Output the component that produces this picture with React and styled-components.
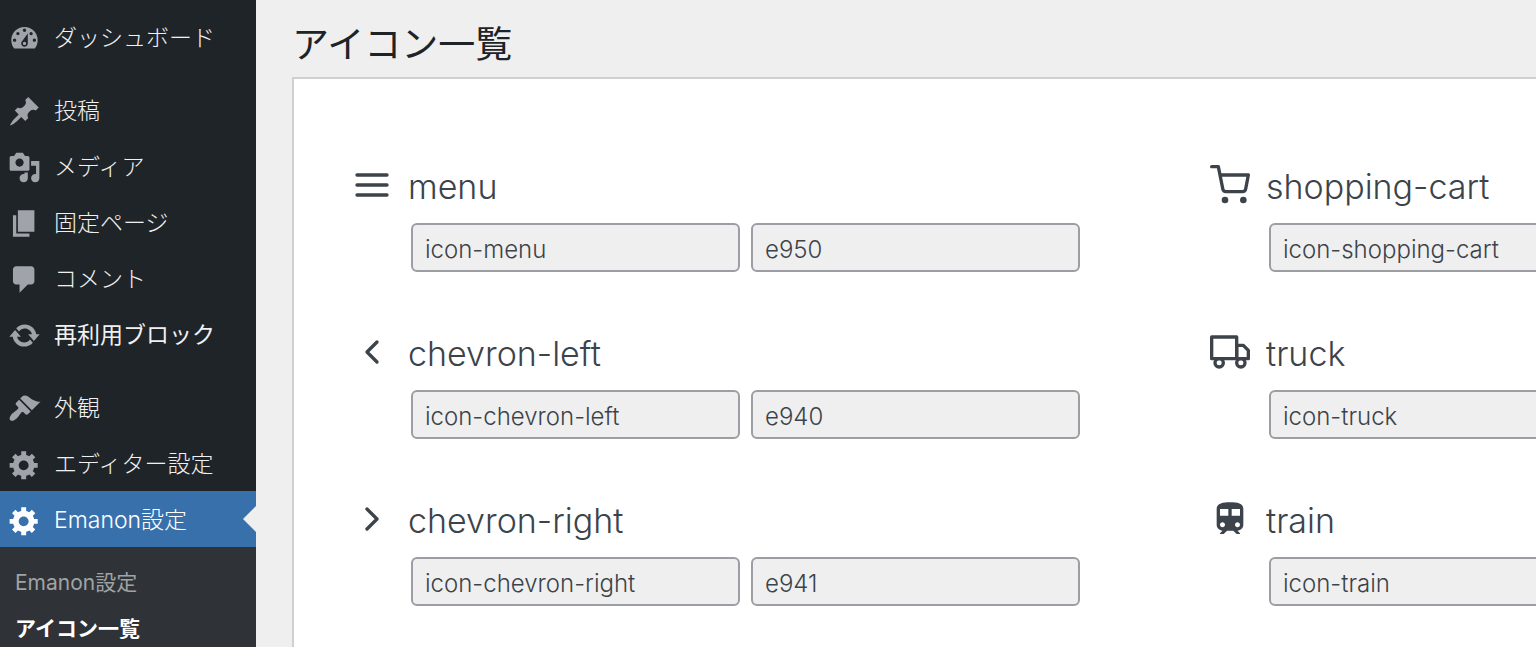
import React, { Fragment } from 'react';
import styled, { createGlobalStyle } from 'styled-components';
import { FiMenu, FiChevronLeft, FiChevronRight, FiShoppingCart, FiTruck } from 'react-icons/fi';
import { MdTrain } from 'react-icons/md';

const GlobalStyle = createGlobalStyle`
  * {
    box-sizing: border-box;
  }
  body {
    margin: 0;
    background: #efefef;
    color: #3c434a;
    font-family: Inter, 'Noto Sans CJK JP', sans-serif;
    overflow: hidden;
  }
`;

const Layout = styled.div`
  display: flex;
  height: 100vh;
`;
const Sidebar = styled.nav`
  flex: 0 0 256px;
  padding-top: 9px;
  background: #1f2428;
  overflow: hidden;
`;
const MenuList = styled.ul`
  margin: 0 0 17px;
  padding: 0;
  list-style: none;
`;
const MenuLink = styled.a`
  position: relative;
  display: flex;
  align-items: center;
  gap: 13px;
  height: 56px;
  padding: 2px 0 0 8px;
  background: ${props => (props.$active ? '#3870ac' : 'transparent')};
  color: ${props => (props.$active ? '#fff' : '#f0f0f1')};
  font-size: 23px;
  font-weight: ${props => (props.$strong ? 400 : 300)};
  line-height: 32px;
  text-decoration: none;
  white-space: nowrap;

  &::after {
    content: '';
    display: ${props => (props.$active ? 'block' : 'none')};
    position: absolute;
    top: 15px;
    right: 0;
    border: 13px solid transparent;
    border-left: 0;
    border-right-color: #efefef;
  }
`;
const MenuIcon = styled.svg`
  width: 33px;
  height: 33px;
  fill: ${props => (props.$active ? '#fff' : '#a0a4aa')};
`;
const Submenu = styled.ul`
  margin: 0;
  padding: 13px 0;
  background: #2f3337;
  list-style: none;
`;
const SubmenuLink = styled.a`
  display: block;
  padding-left: 15px;
  color: ${props => (props.$current ? '#fff' : '#a0a3a6')};
  font-size: 21px;
  font-weight: ${props => (props.$current ? 600 : 400)};
  line-height: 46px;
  text-decoration: none;
`;

const Main = styled.main`
  flex: 1;
  min-width: 0;
  display: flex;
  flex-direction: column;
  padding: 12px 0 0 36px;
`;
const PageTitle = styled.h1`
  margin: 0;
  color: #1d2327;
  font-size: 37px;
  font-weight: 400;
  line-height: 65px;
`;
const Card = styled.section`
  flex: 1;
  display: grid;
  grid-template-columns: repeat(2, max-content);
  align-content: start;
  gap: 60px 130px;
  padding: 86px 0 0 58px;
  border: solid #cfd0d2;
  border-width: 2px 0 0 2px;
  background: #fff;
  overflow: hidden;
`;
const Entry = styled.div`
  display: flex;
  gap: 16px;
`;
const Label = styled.label`
  display: block;
  margin-bottom: 14px;
  font-size: 34px;
  font-weight: 300;
  line-height: 44px;
`;
const Fields = styled.div`
  display: flex;
  gap: 11px;
  padding-left: 3px;
`;
const Input = styled.input`
  width: 329px;
  height: 49px;
  padding: 3px 12px 0;
  border: 2px solid #9c9ea3;
  border-radius: 6px;
  background: #efefef;
  color: #3c434a;
  font-family: inherit;
  font-size: 24px;
  font-weight: 300;
`;

// 20x20 admin menu glyphs
const paths = {
  dashboard:
    'M3.76 16h12.48c1.1-1.37 1.76-3.11 1.76-5 0-4.42-3.58-8-8-8s-8 3.58-8 8c0 1.89.66 3.63 1.76 5zM10 4c.55 0 1 .45 1 1s-.45 1-1 1-1-.45-1-1 .45-1 1-1zM6 6c.55 0 1 .45 1 1s-.45 1-1 1-1-.45-1-1 .45-1 1-1zm8 0c.55 0 1 .45 1 1s-.45 1-1 1-1-.45-1-1 .45-1 1-1zm-5.37 5.55L12 7v6c0 1.1-.9 2-2 2s-2-.9-2-2c0-.57.24-1.08.63-1.45zM4 10c.55 0 1 .45 1 1s-.45 1-1 1-1-.45-1-1 .45-1 1-1zm12 0c.55 0 1 .45 1 1s-.45 1-1 1-1-.45-1-1 .45-1 1-1zm-5 3c0-.55-.45-1-1-1s-1 .45-1 1 .45 1 1 1 1-.45 1-1z',
  post: 'M10.44 3.02l1.82-1.82 6.36 6.35-1.83 1.82c-1.05-.68-2.48-.57-3.41.36l-.75.75c-.92.93-1.04 2.35-.35 3.41l-1.83 1.82-2.41-2.41-2.8 2.79c-.42.42-3.38 2.71-3.8 2.29s1.86-3.39 2.28-3.81l2.79-2.79L4.1 9.36l1.83-1.82c1.05.69 2.48.57 3.4-.36l.75-.75c.93-.92 1.05-2.35.36-3.41z',
  media:
    'M13 11V4c0-.55-.45-1-1-1h-1.67L9 1H5L3.67 3H2c-.55 0-1 .45-1 1v7c0 .55.45 1 1 1h10c.55 0 1-.45 1-1zM7 4.5c1.38 0 2.5 1.12 2.5 2.5S8.38 9.5 7 9.5 4.5 8.38 4.5 7 5.62 4.5 7 4.5zM14 6h5v10.5c0 1.38-1.12 2.5-2.5 2.5S14 17.88 14 16.5s1.12-2.5 2.5-2.5c.17 0 .34.02.5.05V9h-3V6zm-4 8.05V13h2v3.5c0 1.38-1.12 2.5-2.5 2.5S7 17.88 7 16.5 8.12 14 9.5 14c.17 0 .34.02.5.05z',
  page: 'M6 15V2h10v13H6zm-1 1h8v2H3V5h2v11z',
  comment: 'M5 2h9c1.1 0 2 .9 2 2v7c0 1.1-.9 2-2 2h-2l-5 5v-5H5c-1.1 0-2-.9-2-2V4c0-1.1.9-2 2-2z',
  update:
    'M10.2 3.28c3.53 0 6.43 2.61 6.92 6h2.08l-3.5 4-3.5-4h2.32c-.45-1.97-2.21-3.45-4.32-3.45-1.45 0-2.73.71-3.54 1.78L4.95 5.66C6.23 4.2 8.11 3.28 10.2 3.28zm-.4 13.44c-3.52 0-6.43-2.61-6.92-6H.8l3.5-4c1.17 1.33 2.33 2.67 3.5 4H5.48c.45 1.97 2.21 3.45 4.32 3.45 1.45 0 2.73-.71 3.54-1.78l1.71 1.95c-1.28 1.46-3.15 2.38-5.25 2.38z',
  brush:
    'M14.48 11.06L7.41 3.99l1.5-1.5c.5-.56 2.3-.47 3.51.32 1.21.8 1.43 1.28 2.91 2.1 1.18.64 2.45 1.26 4.45.85zm-.71.71L6.7 4.7 4.93 6.47c-.39.39-.39 1.02 0 1.41l1.06 1.06c.39.39.39 1.03 0 1.42-.6.6-1.43 1.11-2.21 1.69-.35.26-.7.53-1.01.84C1.43 14.23.4 16.08 1.4 17.07c.99 1 2.84-.03 4.18-1.36.31-.31.58-.66.85-1.02.57-.78 1.08-1.61 1.69-2.21.39-.39 1.02-.39 1.41 0l1.06 1.06c.39.39 1.02.39 1.41 0z',
  gear: 'M18 12h-2.18c-.17.7-.44 1.35-.81 1.93l1.54 1.54-2.1 2.1-1.54-1.54c-.58.36-1.23.63-1.91.79V19H8v-2.18c-.68-.16-1.33-.43-1.91-.79l-1.54 1.54-2.12-2.12 1.54-1.54c-.36-.58-.63-1.23-.79-1.91H1V9.03h2.17c.16-.7.44-1.35.8-1.94L2.43 5.55l2.1-2.1 1.54 1.54c.58-.37 1.24-.64 1.93-.81V2h3v2.18c.68.16 1.33.43 1.91.79l1.54-1.54 2.12 2.12-1.54 1.54c.36.59.64 1.24.8 1.94H18V12zm-8.5 1.5c1.66 0 3-1.34 3-3s-1.34-3-3-3-3 1.34-3 3 1.34 3 3 3z',
};

const menuGroups = [
  [{ text: 'ダッシュボード', icon: 'dashboard' }],
  [
    { text: '投稿', icon: 'post' },
    { text: 'メディア', icon: 'media' },
    { text: '固定ページ', icon: 'page' },
    { text: 'コメント', icon: 'comment' },
    { text: '再利用ブロック', icon: 'update', strong: true },
  ],
  [
    { text: '外観', icon: 'brush' },
    { text: 'エディター設定', icon: 'gear' },
    {
      text: 'Emanon設定',
      icon: 'gear',
      active: true,
      children: [{ text: 'Emanon設定' }, { text: 'アイコン一覧', current: true }],
    },
  ],
];

const icons = [
  { name: 'menu', code: 'e950', Icon: FiMenu },
  { name: 'shopping-cart', code: 'e96e', Icon: FiShoppingCart },
  { name: 'chevron-left', code: 'e940', Icon: FiChevronLeft },
  { name: 'truck', code: 'e98e', Icon: FiTruck },
  { name: 'chevron-right', code: 'e941', Icon: FiChevronRight },
  { name: 'train', code: 'e91a', Icon: MdTrain },
];

const MenuItem = ({ text, icon, active, strong, children }) => {
  return (
    <li>
      <MenuLink href="#" $active={active} $strong={strong}>
        <MenuIcon viewBox="0 0 20 20" $active={active} aria-hidden="true">
          <path d={paths[icon]} />
        </MenuIcon>
        {text}
      </MenuLink>
      {children && (
        <Submenu>
          {children.map(child => (
            <li key={child.text}>
              <SubmenuLink href="#" $current={child.current}>
                {child.text}
              </SubmenuLink>
            </li>
          ))}
        </Submenu>
      )}
    </li>
  );
};

const IconEntry = ({ name, code, Icon }) => {
  return (
    <Entry>
      <Icon size={40} aria-hidden="true" />
      <div>
        <Label id={`${name}-label`} htmlFor={name}>
          {name}
        </Label>
        <Fields>
          <Input type="text" id={name} value={`icon-${name}`} readOnly />
          <Input type="text" aria-labelledby={`${name}-label`} value={code} readOnly />
        </Fields>
      </div>
    </Entry>
  );
};

function App() {
  return (
    <Fragment>
      <GlobalStyle />
      <Layout>
        <Sidebar>
          {menuGroups.map((group, index) => (
            <MenuList key={index}>
              {group.map(item => (
                <MenuItem key={item.text} {...item} />
              ))}
            </MenuList>
          ))}
        </Sidebar>
        <Main>
          <PageTitle>アイコン一覧</PageTitle>
          <Card>
            {icons.map(icon => (
              <IconEntry key={icon.name} {...icon} />
            ))}
          </Card>
        </Main>
      </Layout>
    </Fragment>
  );
}

export default App;
